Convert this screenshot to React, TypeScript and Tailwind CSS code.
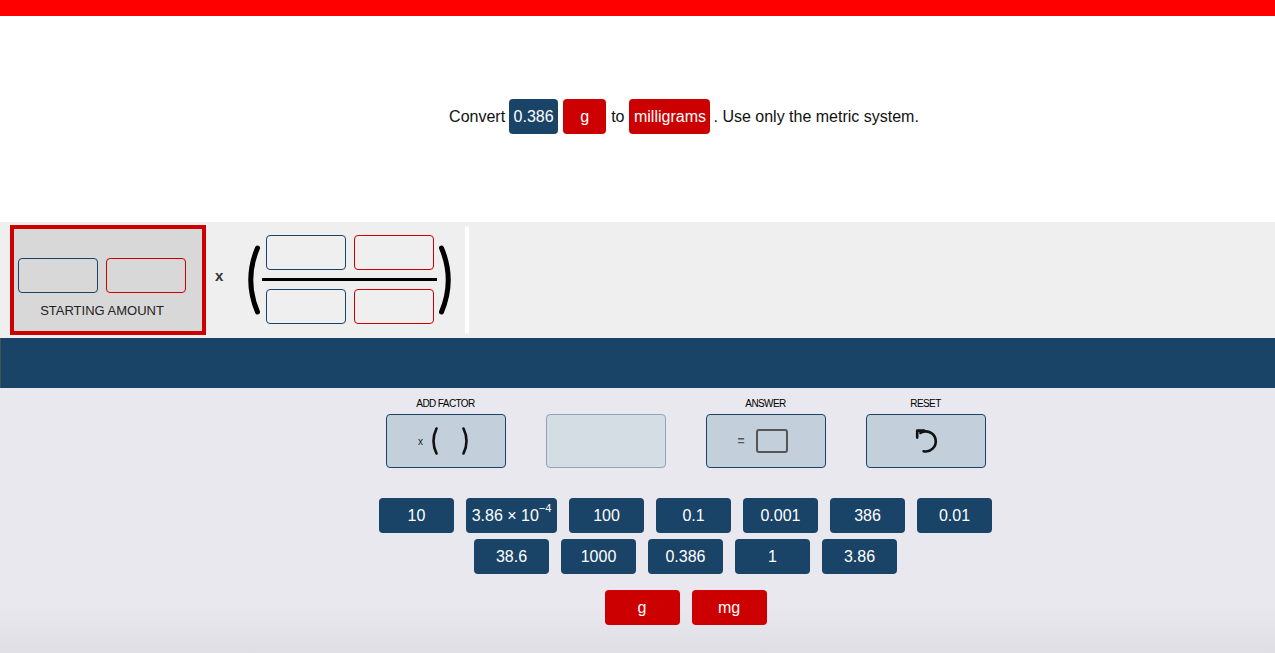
import React from "react";

const BLUE = "bg-[#1a4368]";

function Chip({ children, red, w }: { children: React.ReactNode; red?: boolean; w?: string }) {
  return (
    <div
      className={`${red ? "bg-[#cc0000]" : BLUE} ${w ?? "w-[75px]"} h-[35px] rounded-[4px] flex items-center justify-center text-white text-[16px] leading-none`}
    >
      {children}
    </div>
  );
}

function Slot({ red }: { red?: boolean }) {
  return (
    <div
      className={`w-[80px] h-[35px] rounded-[4px] border ${red ? "border-[#cc0000]" : "border-[#1a4368]"}`}
    />
  );
}

function BigParen({ flip }: { flip?: boolean }) {
  return (
    <svg width="17" height="70" viewBox="0 0 17 70" className={flip ? "-scale-x-100" : ""}>
      <path d="M13.5 3 Q0 35 13.5 67" fill="none" stroke="#000" strokeWidth="5" strokeLinecap="round" />
    </svg>
  );
}

function SmallParen({ flip }: { flip?: boolean }) {
  return (
    <svg width="8" height="28" viewBox="0 0 8 28" className={flip ? "-scale-x-100" : ""}>
      <path d="M6.5 1.5 Q0.5 14 6.5 26.5" fill="none" stroke="#111" strokeWidth="2.6" strokeLinecap="round" />
    </svg>
  );
}

function ResetIcon() {
  return (
    <svg width="28" height="30" viewBox="0 0 28 30" className="ml-[2px]">
      <path
        d="M7.4 7.0 A10 10 0 1 1 10.6 25.2"
        fill="none"
        stroke="#111"
        strokeWidth="2.6"
        strokeLinecap="round"
      />
      <path d="M4.2 11.6 V4.6 H11" fill="none" stroke="#111" strokeWidth="2.6" strokeLinecap="round" strokeLinejoin="round" />
    </svg>
  );
}

function ToolButton({ label, children, disabled }: { label?: string; children?: React.ReactNode; disabled?: boolean }) {
  return (
    <div className="flex flex-col items-center w-[120px]">
      <div className="h-[10px] mt-[1px] text-[10px] leading-[10px] text-black tracking-[-0.6px] whitespace-nowrap">
        {label ?? ""}
      </div>
      <div
        className={`mt-[5px] w-[120px] h-[54px] rounded-[4px] border flex items-center justify-center ${
          disabled ? "bg-[#d4dce4] border-[#8fa4b9]" : "bg-[#c3cfdb] border-[#1a4368]"
        }`}
      >
        {children}
      </div>
    </div>
  );
}

export default function App() {
  const row1 = ["10", "sci", "100", "0.1", "0.001", "386", "0.01"];
  const row2 = ["38.6", "1000", "0.386", "1", "3.86"];

  return (
    <div className="w-[1275px] h-[653px] flex flex-col overflow-hidden font-['Liberation_Sans',Arial,sans-serif]">
      {/* top accent bar */}
      <div className="h-[16px] bg-[#ff0000] shrink-0" />

      {/* question */}
      <div className="h-[206px] shrink-0 bg-white flex justify-center pl-[93px] pt-[83px]">
        <div className="flex items-center h-[35px] text-[16px] text-[#111]">
          <span className="mr-[4px]">Convert</span>
          <div className="h-[35px] w-[49px] rounded-[4px] bg-[#1a4368] text-white flex items-center justify-center">0.386</div>
          <div className="ml-[5px] h-[35px] w-[43px] rounded-[4px] bg-[#cc0000] text-white flex items-center justify-center">g</div>
          <span className="mx-[5px]">to</span>
          <div className="h-[35px] w-[81px] rounded-[4px] bg-[#cc0000] text-white flex items-center justify-center">milligrams</div>
          <span className="ml-[3px]">. Use only the metric system.</span>
        </div>
      </div>

      {/* work area */}
      <div className="h-[116px] shrink-0 bg-[#efefef] flex items-center">
        <div className="ml-[10px] w-[196px] h-[110px] border-4 border-[#cc0000] bg-[#d8d8d8] flex flex-col items-center pt-[29px] pr-[12px]">
          <div className="flex gap-[8px]">
            <Slot />
            <Slot red />
          </div>
          <div className="mt-[10px] text-[13px] leading-[15px] text-[#222] whitespace-nowrap">STARTING AMOUNT</div>
        </div>

        <div className="ml-[9px] -mt-[8px] text-[15px] font-bold text-[#333]">x</div>

        <div className="ml-[21px] flex items-center">
          <BigParen />
          <div className="flex flex-col items-center mx-[1px] -mt-[1px]">
            <div className="flex gap-[8px]">
              <Slot />
              <Slot red />
            </div>
            <div className="w-[175px] h-[3px] bg-black my-[8px]" />
            <div className="flex gap-[8px]">
              <Slot />
              <Slot red />
            </div>
          </div>
          <BigParen flip />
        </div>

        <div className="ml-[10px] w-[4px] h-[108px] rounded-full bg-white" />
      </div>

      {/* band */}
      <div className="h-[50px] shrink-0 bg-[#1a4368] border-l border-[#3d5550]" />

      {/* controls */}
      <div className="flex-1 bg-[linear-gradient(to_bottom,#e9e8ee_82%,#e0dfe5)] pl-[96px] flex flex-col items-center pt-[10px]">
        <div className="flex gap-[40px]">
          <ToolButton label="ADD FACTOR">
            <div className="flex items-center -ml-[3px]">
              <span className="text-[10px] text-[#222] mr-[7px]">x</span>
              <SmallParen />
              <div className="w-[24px]" />
              <SmallParen flip />
            </div>
          </ToolButton>
          <ToolButton disabled />
          <ToolButton label="ANSWER">
            <div className="flex items-center -ml-[6px]">
              <span className="text-[12px] font-bold text-[#555] mr-[11px]">=</span>
              <div className="w-[32px] h-[24px] rounded-[3px] border-2 border-[#555]" />
            </div>
          </ToolButton>
          <ToolButton label="RESET">
            <ResetIcon />
          </ToolButton>
        </div>

        <div className="mt-[30px] flex gap-[12px]">
          {row1.map((v) =>
            v === "sci" ? (
              <Chip key={v} w="w-[91px]">
                <span className="flex items-start">
                  <span>3.86 × 10</span>
                  <span className="text-[11px] leading-none -mt-[5px]">−4</span>
                </span>
              </Chip>
            ) : (
              <Chip key={v}>{v}</Chip>
            )
          )}
        </div>
        <div className="mt-[6px] flex gap-[12px]">
          {row2.map((v) => (
            <Chip key={v}>{v}</Chip>
          ))}
        </div>
        <div className="mt-[16px] flex gap-[12px]">
          <Chip red>g</Chip>
          <Chip red>mg</Chip>
        </div>
      </div>
    </div>
  );
}
